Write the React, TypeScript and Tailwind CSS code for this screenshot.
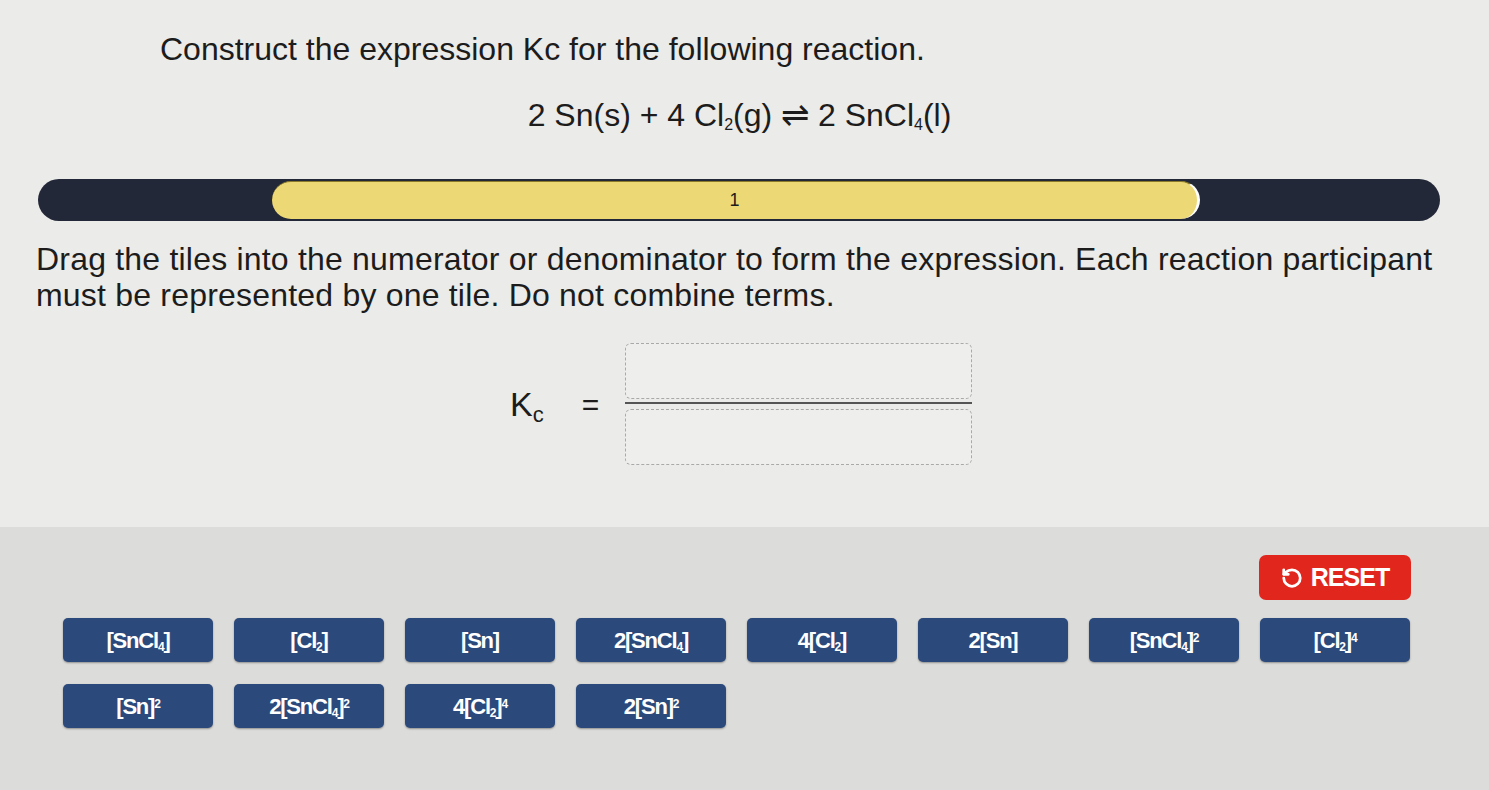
import { RotateCcw } from "lucide-react";

const font = { fontFamily: '"Liberation Sans", Arial, sans-serif' };

type Tile = { pre?: string; base: string; sub?: string; sup?: string };

const tiles: Tile[] = [
  { base: "[SnCl", sub: "4" },
  { base: "[Cl", sub: "2" },
  { base: "[Sn]" },
  { pre: "2", base: "[SnCl", sub: "4" },
  { pre: "4", base: "[Cl", sub: "2" },
  { pre: "2", base: "[Sn]" },
  { base: "[SnCl", sub: "4", sup: "2" },
  { base: "[Cl", sub: "2", sup: "4" },
  { base: "[Sn]", sup: "2" },
  { pre: "2", base: "[SnCl", sub: "4", sup: "2" },
  { pre: "4", base: "[Cl", sub: "2", sup: "4" },
  { pre: "2", base: "[Sn]", sup: "2" },
];

function TileBox({ t }: { t: Tile }) {
  return (
    <div className="w-[150px] h-[44px] rounded-[5px] bg-[#2b4a7b] shadow-[0_1px_2px_rgba(0,0,0,0.35)] flex items-center justify-center text-white font-bold text-[22px] tracking-[-1.2px]">
      <span>
        {t.pre}
        {t.base}
        {t.sub && <sub className="text-[12px]">{t.sub}</sub>}
        {t.sub && "]"}
        {t.sup && <sup className="text-[12px]">{t.sup}</sup>}
      </span>
    </div>
  );
}

export default function App() {
  return (
    <div className="w-[1489px] h-[790px] overflow-hidden text-[#1c1c1c]" style={font}>
      <div className="h-[527px] bg-[#ebebe9] flex flex-col">
        <div className="pl-[160px] pt-[31px] text-[32px] leading-[36px]">
          Construct the expression Kc for the following reaction.
        </div>
        <div className="mt-[30px] text-center pr-[10px] text-[32px] leading-[36px]">
          2 Sn(s) + 4 Cl<sub className="text-[16px]">2</sub>(g) <span className="text-[34px] leading-none">⇌</span> 2 SnCl
          <sub className="text-[16px]">4</sub>(l)
        </div>
        <div className="ml-[38px] mr-[49px] mt-[46px] h-[42px] rounded-full bg-[#232838] flex items-center">
          <div className="ml-[234px] w-[928px] h-[38px] rounded-full bg-[#ecd874] border-r-[3px] border-white border-t border-t-[#8a7a2a] flex items-center justify-center text-[18px]">
            1
          </div>
        </div>
        <div className="px-[36px] mt-[20px] text-[32px] leading-[36px] tracking-[0.2px]">
          Drag the tiles into the numerator or denominator to form the expression. Each reaction participant must be
          represented by one tile. Do not combine terms.
        </div>
        <div className="mt-[30px] flex items-center pl-[510px]">
          <div className="text-[34px] leading-none">
            K<sub className="text-[22px]">c</sub>
          </div>
          <div className="ml-[38px] text-[30px]">=</div>
          <div className="ml-[26px] flex flex-col w-[347px]">
            <div className="h-[56px] rounded-[6px] border border-dashed border-[#a9a9a9] bg-[#eeeeec]" />
            <div className="h-[2px] bg-[#555] mt-[3px] mb-[5px]" />
            <div className="h-[56px] rounded-[6px] border border-dashed border-[#a9a9a9] bg-[#eeeeec]" />
          </div>
        </div>
      </div>
      <div className="h-[263px] bg-[#dcdcdb] pt-[28px]">
        <div className="flex justify-end pr-[78px]">
          <button className="w-[152px] h-[45px] rounded-[7px] bg-[#e1261d] text-white font-bold text-[25px] tracking-[-1px] flex items-center justify-center gap-[8px]">
            <RotateCcw size={22} strokeWidth={3} />
            RESET
          </button>
        </div>
        <div className="mt-[18px] pl-[63px] grid grid-cols-[repeat(8,150px)] gap-x-[21px] gap-y-[22px]">
          {tiles.map((t, i) => (
            <TileBox key={i} t={t} />
          ))}
        </div>
      </div>
    </div>
  );
}
